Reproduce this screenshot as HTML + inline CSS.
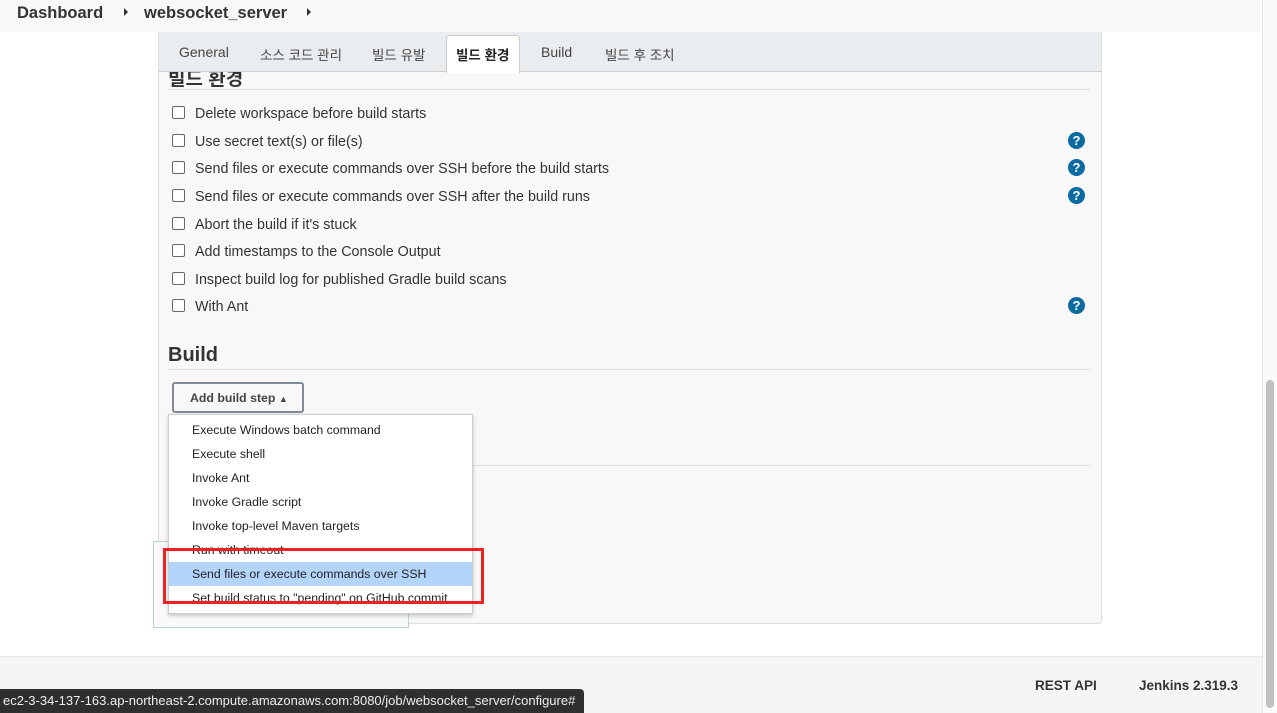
<!DOCTYPE html>
<html><head><meta charset="utf-8"><style>
*{box-sizing:border-box;margin:0;padding:0}
body{width:1277px;height:713px;overflow:hidden;background:#fff;font-family:"Liberation Sans","Noto Sans CJK KR",sans-serif;color:#333;position:relative}
.abs{position:absolute}
.hdr{left:0;top:0;width:1262px;height:32px;background:#f8f8f8}
.crumb{top:4px;font-size:16.5px;font-weight:bold;color:#333}
.tri{top:8px;width:0;height:0;border-left:4px solid #333;border-top:4px solid transparent;border-bottom:4px solid transparent}
.panel{left:158px;top:32px;width:944px;height:592px;background:#f8f8f8;border:1px solid #ddd;border-top:none;border-radius:0 0 4px 4px}
.tabs{left:158px;top:32px;width:944px;height:40px;background:#eaedf0;border-bottom:1px solid #ccc;border-left:1px solid #ddd;border-right:1px solid #ddd}
.tab{top:44px;font-size:14px;color:#444}
.acttab{left:446px;top:35px;width:74px;height:38px;background:#fff;border:1px solid #ccc;border-bottom:none;border-radius:4px 4px 0 0}
.row{left:172px;font-size:14.3px;color:#333}
.row i{display:inline-block;width:13px;height:13px;border:1px solid #666;border-radius:2px;background:#fff;vertical-align:-1px;margin-right:10px}
.help{left:1068px;width:17px;height:17px;border-radius:50%;background:#0c6aa3;color:#fff;font-size:13px;font-weight:bold;text-align:center;line-height:17px}
.dd{font-size:12.3px;color:#222;left:192px}
</style></head><body>
<div class="abs hdr"></div>
<div class="abs crumb" style="left:17px">Dashboard</div>
<div class="abs tri" style="left:124px"></div>
<div class="abs crumb" style="left:144px">websocket_server</div>
<div class="abs tri" style="left:307px"></div>

<div class="abs panel"></div>
<div class="abs" style="left:168px;top:64px;font-size:19px;font-weight:bold;color:#333">빌드 환경</div>
<div class="abs tabs"></div>
<div class="abs acttab"></div>
<div class="abs tab" style="left:179px">General</div>
<div class="abs tab" style="left:260px;font-size:13.5px">소스 코드 관리</div>
<div class="abs tab" style="left:372px;font-size:13.5px">빌드 유발</div>
<div class="abs tab" style="left:456px;font-weight:bold;color:#222;font-size:13.5px">빌드 환경</div>
<div class="abs tab" style="left:541px">Build</div>
<div class="abs tab" style="left:605px;font-size:13.5px">빌드 후 조치</div>
<div class="abs" style="left:168px;top:89px;width:922px;height:1px;background:#e0e0e0"></div>

<div class="abs row" style="top:106px"><i></i>Delete workspace before build starts</div>
<div class="abs row" style="top:134px"><i></i>Use secret text(s) or file(s)</div>
<div class="abs row" style="top:161px"><i></i>Send files or execute commands over SSH before the build starts</div>
<div class="abs row" style="top:189px"><i></i>Send files or execute commands over SSH after the build runs</div>
<div class="abs row" style="top:217px"><i></i>Abort the build if it's stuck</div>
<div class="abs row" style="top:244px"><i></i>Add timestamps to the Console Output</div>
<div class="abs row" style="top:272px"><i></i>Inspect build log for published Gradle build scans</div>
<div class="abs row" style="top:299px"><i></i>With Ant</div>
<div class="abs help" style="top:132px">?</div>
<div class="abs help" style="top:159px">?</div>
<div class="abs help" style="top:187px">?</div>
<div class="abs help" style="top:297px">?</div>

<div class="abs" style="left:168px;top:344px;font-size:20px;font-weight:bold;color:#333">Build</div>
<div class="abs" style="left:168px;top:369px;width:922px;height:1px;background:#ddd"></div>
<div class="abs" style="left:472px;top:465px;width:618px;height:1px;background:#ddd"></div>
<div class="abs" style="left:172px;top:382px;width:132px;height:31px;border:2px solid #7f8a94;border-radius:3px;background:#f8f8f8;font-size:12.3px;font-weight:bold;color:#444;padding:7px 0 0 16px">Add build step <span style="font-size:9px">▲</span></div>

<div class="abs" style="left:153px;top:541px;width:256px;height:87px;border:1px solid #b8d8c8;background:#fafafa"></div>
<div class="abs" style="left:168px;top:414px;width:305px;height:200px;background:#fff;border:1px solid #ccc;box-shadow:0 2px 4px rgba(0,0,0,.2)"></div>
<div class="abs" style="left:169px;top:562px;width:303px;height:24px;background:#b3d4fb"></div>
<div class="abs dd" style="top:423px">Execute Windows batch command</div>
<div class="abs dd" style="top:447px">Execute shell</div>
<div class="abs dd" style="top:471px">Invoke Ant</div>
<div class="abs dd" style="top:495px">Invoke Gradle script</div>
<div class="abs dd" style="top:519px">Invoke top-level Maven targets</div>
<div class="abs dd" style="top:543px">Run with timeout</div>
<div class="abs dd" style="top:567px">Send files or execute commands over SSH</div>
<div class="abs dd" style="top:591px">Set build status to "pending" on GitHub commit</div>
<div class="abs" style="left:163px;top:548px;width:321px;height:56px;border:3px solid #ee2020"></div>

<div class="abs" style="left:0;top:656px;width:1262px;height:57px;background:#f5f5f5;border-top:1px solid #e6e9ec"></div>
<div class="abs" style="left:1035px;top:678px;font-size:13.5px;font-weight:bold;color:#333">REST API</div>
<div class="abs" style="left:1139px;top:678px;font-size:13.5px;font-weight:bold;color:#333">Jenkins 2.319.3</div>
<div class="abs" style="left:0;top:689px;width:584px;height:24px;background:#2d2f31;border-radius:0 4px 0 0;color:#eee;font-size:13px;padding:4px 0 0 3px">ec2-3-34-137-163.ap-northeast-2.compute.amazonaws.com:8080/job/websocket_server/configure#</div>

<div class="abs" style="left:1262px;top:0;width:15px;height:713px;background:#fafafa;border-left:1px solid #e6e6e6"></div>
<div class="abs" style="left:1266px;top:380px;width:8px;height:328px;background:#c1c1c1;border-radius:4px"></div>
</body></html>
